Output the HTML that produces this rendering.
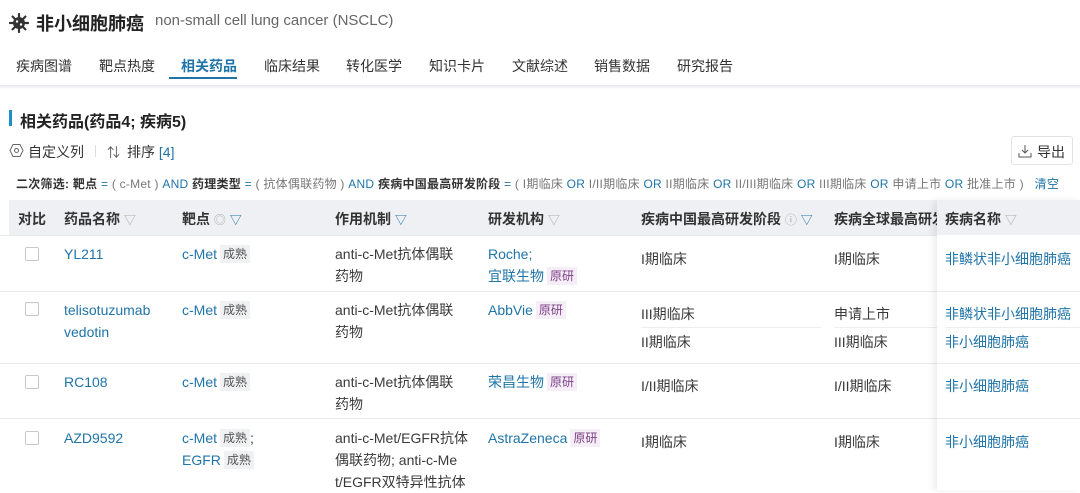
<!DOCTYPE html>
<html><head><meta charset="utf-8"><style>
*{margin:0;padding:0;box-sizing:border-box}
body{width:1080px;height:490px;overflow:hidden;background:#fff;font-family:"Liberation Sans","Noto Sans CJK SC",sans-serif;color:#3a3a3a;position:relative}
.a{position:absolute;white-space:nowrap}
.b{color:#1f74a8}
.g{color:#333}
.tag{display:inline-block;background:#f0f1f3;color:#555;font-size:12px;padding:0 3px;line-height:18px;margin-left:3px;vertical-align:1px}
.tp{background:#f5eef6;color:#7b3f85}
.cb{position:absolute;left:25px;width:14px;height:14px;border:1px solid #c4c8ce;border-radius:2px;background:#fff}
.hl{position:absolute;left:0;width:1080px;height:1px;background:#e8eaee}
.f{font-size:14px;line-height:22px}
.th{font-size:14px;font-weight:bold;color:#333}
.fi{color:#aaa;font-weight:normal;font-size:12px}
.fb{color:#1f74a8;font-weight:normal;font-size:12px}
</style></head><body>
<svg class="a" style="left:9px;top:13px" width="20" height="20" viewBox="0 0 20 20"><circle cx="10" cy="10" r="6" fill="#333"/><g stroke="#333" stroke-width="2.2" stroke-linecap="round"><path d="M10 1v3M10 16v3M1 10h3M16 10h3M3.6 3.6l2 2M14.4 14.4l2 2M3.6 16.4l2-2M14.4 5.6l2-2"/></g><circle cx="8" cy="8.5" r="1.2" fill="#fff"/><circle cx="12" cy="11.5" r="1.2" fill="#fff"/></svg>
<div class="a" style="left:36px;top:10px;font-size:18px;font-weight:bold;color:#222">非小细胞肺癌</div>
<div class="a" style="left:155px;top:12px;font-size:15px;color:#666">non-small cell lung cancer (NSCLC)</div>
<div class="a" style="left:16px;top:56px;font-size:14px;color:#333;word-spacing:0">
<span style="position:absolute;left:0">疾病图谱</span><span style="position:absolute;left:83px">靶点热度</span><span style="position:absolute;left:165px;color:#1f74a8;font-weight:bold">相关药品</span><span style="position:absolute;left:248px">临床结果</span><span style="position:absolute;left:330px">转化医学</span><span style="position:absolute;left:413px">知识卡片</span><span style="position:absolute;left:496px">文献综述</span><span style="position:absolute;left:578px">销售数据</span><span style="position:absolute;left:661px">研究报告</span></div>
<div class="a" style="left:169px;top:77px;width:68px;height:2px;background:#1f74a8"></div>
<div class="a" style="left:0;top:85px;width:1080px;height:4px;background:linear-gradient(#e6e8ee,#fff)"></div>
<div class="a" style="left:9px;top:110px;width:3px;height:16px;background:#1f8fc8"></div>
<div class="a" style="left:20px;top:108px;font-size:16px;font-weight:bold;color:#222">相关药品(药品4; 疾病5)</div>
<svg class="a" style="left:9px;top:143px" width="15" height="15" viewBox="0 0 15 15"><path d="M4 1.5h7l3 6-3 6H4l-3-6z" fill="none" stroke="#666"/><circle cx="7.5" cy="7.5" r="2" fill="none" stroke="#666"/></svg>
<div class="a" style="left:28px;top:142px;font-size:14px;color:#333">自定义列</div>
<div class="a" style="left:95px;top:145px;width:1px;height:12px;background:#ddd"></div>
<div class="a" style="left:107px;top:142px;font-size:13px;color:#555">⇅</div>
<div class="a" style="left:127px;top:142px;font-size:14px;color:#333">排序 <span class="b">[4]</span></div>
<div class="a" style="left:1011px;top:136px;width:62px;height:29px;border:1px solid #e0e2e6;border-radius:3px"></div>
<svg class="a" style="left:1018px;top:144px" width="14" height="14" viewBox="0 0 14 14"><path d="M7 1v8M4 6l3 3 3-3M1 9v4h12V9" fill="none" stroke="#555"/></svg>
<div class="a" style="left:1037px;top:142px;font-size:14px;color:#333">导出</div>
<div class="a" style="left:16px;top:175px;font-size:12px;color:#333;letter-spacing:0.25px"><b>二次筛选:</b> <b>靶点</b> <span class="b">=</span> <span style="color:#777">( c-Met )</span> <span class="b">AND</span> <b>药理类型</b> <span class="b">=</span> <span style="color:#777">( 抗体偶联药物 )</span> <span class="b">AND</span> <b>疾病中国最高研发阶段</b> <span class="b">=</span> <span style="color:#777">( I期临床</span> <span class="b">OR</span> <span style="color:#777">I/II期临床</span> <span class="b">OR</span> <span style="color:#777">II期临床</span> <span class="b">OR</span> <span style="color:#777">II/III期临床</span> <span class="b">OR</span> <span style="color:#777">III期临床</span> <span class="b">OR</span> <span style="color:#777">申请上市</span> <span class="b">OR</span> <span style="color:#777">批准上市 )</span> &nbsp;&nbsp;<span class="b">清空</span></div>
<div class="a" style="left:9px;top:200px;width:1071px;height:35px;background:#eef0f3"></div>
<div class="a th" style="left:18px;top:209px">对比</div>
<div class="a th" style="left:64px;top:209px">药品名称 <span class="fi">▽</span></div>
<div class="a th" style="left:182px;top:209px">靶点 <span class="fi">◎</span> <span class="fb">▽</span></div>
<div class="a th" style="left:335px;top:209px">作用机制 <span class="fb">▽</span></div>
<div class="a th" style="left:488px;top:209px">研发机构 <span class="fi">▽</span></div>
<div class="a th" style="left:641px;top:209px">疾病中国最高研发阶段 <span class="fi">ⓘ</span> <span class="fb">▽</span></div>
<div class="a th" style="left:834px;top:209px;width:103px;overflow:hidden">疾病全球最高研发阶段</div>
<div class="hl" style="top:235px"></div>
<div class="hl" style="top:291px"></div>
<div class="hl" style="top:363px"></div>
<div class="hl" style="top:418px"></div>
<div class="a" style="left:641px;top:327px;width:180px;height:1px;background:#eceef1"></div>
<div class="a" style="left:834px;top:327px;width:246px;height:1px;background:#eceef1"></div>
<!-- row1 -->
<div class="cb" style="top:247px"></div>
<div class="a f b" style="left:64px;top:243px">YL211</div>
<div class="a f b" style="left:182px;top:243px">c-Met<span class="tag">成熟</span></div>
<div class="a f" style="left:335px;top:243px">anti-c-Met抗体偶联<br>药物</div>
<div class="a f b" style="left:488px;top:243px">Roche;<br>宜联生物<span class="tag tp">原研</span></div>
<div class="a f" style="left:641px;top:248px">I期临床</div>
<div class="a f" style="left:834px;top:248px">I期临床</div>
<!-- row2 -->
<div class="cb" style="top:302px"></div>
<div class="a f b" style="left:64px;top:299px">telisotuzumab<br>vedotin</div>
<div class="a f b" style="left:182px;top:299px">c-Met<span class="tag">成熟</span></div>
<div class="a f" style="left:335px;top:299px">anti-c-Met抗体偶联<br>药物</div>
<div class="a f b" style="left:488px;top:299px">AbbVie<span class="tag tp">原研</span></div>
<div class="a f" style="left:641px;top:303px">III期临床</div>
<div class="a f" style="left:834px;top:303px">申请上市</div>
<div class="a f" style="left:641px;top:331px">II期临床</div>
<div class="a f" style="left:834px;top:331px">III期临床</div>
<!-- row3 -->
<div class="cb" style="top:375px"></div>
<div class="a f b" style="left:64px;top:371px">RC108</div>
<div class="a f b" style="left:182px;top:371px">c-Met<span class="tag">成熟</span></div>
<div class="a f" style="left:335px;top:371px">anti-c-Met抗体偶联<br>药物</div>
<div class="a f b" style="left:488px;top:371px">荣昌生物<span class="tag tp">原研</span></div>
<div class="a f" style="left:641px;top:375px">I/II期临床</div>
<div class="a f" style="left:834px;top:375px">I/II期临床</div>
<!-- row4 -->
<div class="cb" style="top:431px"></div>
<div class="a f b" style="left:64px;top:427px">AZD9592</div>
<div class="a f b" style="left:182px;top:427px">c-Met<span class="tag">成熟</span><span class="g">;</span><br>EGFR<span class="tag">成熟</span></div>
<div class="a f" style="left:335px;top:427px">anti-c-Met/EGFR抗体<br>偶联药物; anti-c-Me<br>t/EGFR双特异性抗体</div>
<div class="a f b" style="left:488px;top:427px">AstraZeneca<span class="tag tp">原研</span></div>
<div class="a f" style="left:641px;top:431px">I期临床</div>
<div class="a f" style="left:834px;top:431px">I期临床</div>
<!-- sticky column -->
<div class="a" style="left:937px;top:200px;width:143px;height:290px;background:#fff;box-shadow:-4px 0 6px rgba(0,0,0,0.07)"></div>
<div class="a" style="left:937px;top:200px;width:143px;height:35px;background:#eef0f3"></div>
<div class="a th" style="left:945px;top:209px">疾病名称 <span class="fi">▽</span></div>
<div class="a" style="left:937px;top:291px;width:143px;height:1px;background:#e8eaee"></div>
<div class="a" style="left:937px;top:363px;width:143px;height:1px;background:#e8eaee"></div>
<div class="a" style="left:937px;top:418px;width:143px;height:1px;background:#e8eaee"></div>
<div class="a" style="left:945px;top:327px;width:135px;height:1px;background:#eceef1"></div>
<div class="a f b" style="left:945px;top:248px">非鳞状非小细胞肺癌</div>
<div class="a f b" style="left:945px;top:303px">非鳞状非小细胞肺癌</div>
<div class="a f b" style="left:945px;top:331px">非小细胞肺癌</div>
<div class="a f b" style="left:945px;top:375px">非小细胞肺癌</div>
<div class="a f b" style="left:945px;top:431px">非小细胞肺癌</div>
</body></html>
